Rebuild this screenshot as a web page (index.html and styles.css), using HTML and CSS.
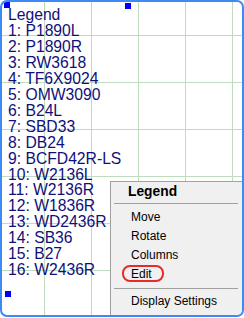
FILE: index.html
```html
<!DOCTYPE html>
<html>
<head>
<meta charset="utf-8">
<link rel="stylesheet" href="styles.css">
</head>
<body>
<div class="frame">
  <div class="legend">
    <div class="line">Legend</div>
    <div class="line">1: P1890L</div>
    <div class="line">2: P1890R</div>
    <div class="line">3: RW3618</div>
    <div class="line">4: TF6X9024</div>
    <div class="line">5: OMW3090</div>
    <div class="line">6: B24L</div>
    <div class="line">7: SBD33</div>
    <div class="line">8: DB24</div>
    <div class="line">9: BCFD42R-LS</div>
    <div class="line">10: W2136L</div>
    <div class="line">11: W2136R</div>
    <div class="line">12: W1836R</div>
    <div class="line">13: WD2436R</div>
    <div class="line">14: SB36</div>
    <div class="line">15: B27</div>
    <div class="line">16: W2436R</div>
  </div>
  <span class="handle h-tl"></span>
  <span class="handle h-tm"></span>
  <span class="handle h-bl"></span>
  <div class="menu">
    <div class="menu-title">Legend</div>
    <div class="sep sep-top"></div>
    <div class="item">Move</div>
    <div class="item">Rotate</div>
    <div class="item">Columns</div>
    <div class="item item-edit">Edit</div>
    <div class="sep sep-bottom"></div>
    <div class="item">Display Settings</div>
  </div>
</div>
</body>
</html>
```

FILE: styles.css
```css
html, body {
  margin: 0;
  padding: 0;
  background: #ffffff;
}

.frame {
  position: relative;
  box-sizing: border-box;
  width: 244px;
  height: 317px;
  border: 2px solid #3d8af7;
  border-radius: 7px;
  overflow: hidden;
  background-color: #ffffff;
  background-image:
    linear-gradient(to right, #bfdcbf 1px, transparent 1px),
    linear-gradient(to bottom, #bfdcbf 1px, transparent 1px);
  background-size: 47px 47px;
  background-position: 42px 33px;
}

.legend {
  padding: 5px 0 0 6px;
  font-family: "Liberation Sans", Arial, sans-serif;
  font-size: 15.7px;
  line-height: 15.95px;
  color: #10107a;
}

.line {
  white-space: nowrap;
}

.handle {
  position: absolute;
  width: 6px;
  height: 6px;
  background: #0000ff;
}

.h-tl { left: 2px; top: 0px; }
.h-tm { left: 123px; top: 1px; }
.h-bl { left: 3px; top: 289px; }

.menu {
  position: absolute;
  left: 108px;
  top: 179px;
  width: 133px;
  height: 140px;
  box-sizing: border-box;
  border: 1px solid #a0a0a0;
  background: #f0f0f0;
  font-family: "Liberation Sans", Arial, sans-serif;
  color: #000000;
}

.menu-title {
  height: 20px;
  line-height: 20px;
  padding-left: 17px;
  font-size: 13.8px;
  font-weight: bold;
}

.sep {
  height: 1px;
  background: #a0a0a0;
  margin-left: 3px;
  margin-right: 4px;
}

.sep-top {
  margin-top: 1px;
  margin-bottom: 4px;
}

.sep-bottom {
  margin-top: 4px;
  margin-bottom: 3px;
}

.item {
  position: relative;
  height: 19px;
  line-height: 19px;
  padding-left: 20px;
  font-size: 12px;
  white-space: nowrap;
}

.item-edit::after {
  content: "";
  position: absolute;
  left: 11px;
  top: 0;
  width: 42px;
  height: 17px;
  box-sizing: border-box;
  border: 2px solid #e52b2b;
  border-radius: 8px;
}
```
